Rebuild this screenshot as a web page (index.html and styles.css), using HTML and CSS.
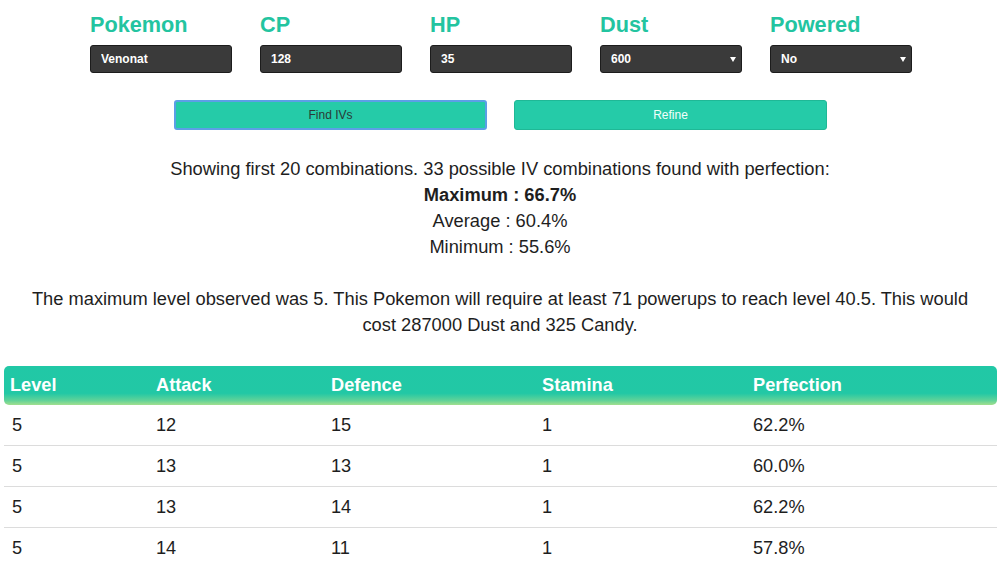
FILE: index.html
```html
<!DOCTYPE html>
<html>
<head>
<meta charset="utf-8">
<link rel="stylesheet" href="styles.css">
</head>
<body>
<div class="form">
  <div class="field">
    <label class="label">Pokemon</label>
    <input class="input" type="text" value="Venonat">
  </div>
  <div class="field">
    <label class="label">CP</label>
    <input class="input" type="text" value="128">
  </div>
  <div class="field">
    <label class="label">HP</label>
    <input class="input" type="text" value="35">
  </div>
  <div class="field">
    <label class="label">Dust</label>
    <div class="select-wrap"><select class="input select"><option>600</option></select></div>
  </div>
  <div class="field">
    <label class="label">Powered</label>
    <div class="select-wrap"><select class="input select"><option>No</option></select></div>
  </div>
</div>
<div class="actions">
  <button class="btn btn-focus">Find IVs</button>
  <button class="btn btn-light">Refine</button>
</div>
<div class="summary">
  <p>Showing first 20 combinations. 33 possible IV combinations found with perfection:</p>
  <p class="bold">Maximum : 66.7%</p>
  <p>Average : 60.4%</p>
  <p>Minimum : 55.6%</p>
</div>
<div class="summary level">
  <p>The maximum level observed was 5. This Pokemon will require at least 71 powerups to reach level 40.5. This would cost 287000 Dust and 325 Candy.</p>
</div>
<table class="results">
  <thead>
    <tr><th class="c1">Level</th><th class="c2">Attack</th><th class="c3">Defence</th><th class="c4">Stamina</th><th class="c5">Perfection</th></tr>
  </thead>
  <tbody>
    <tr><td>5</td><td>12</td><td>15</td><td>1</td><td>62.2%</td></tr>
    <tr><td>5</td><td>13</td><td>13</td><td>1</td><td>60.0%</td></tr>
    <tr><td>5</td><td>13</td><td>14</td><td>1</td><td>62.2%</td></tr>
    <tr><td>5</td><td>14</td><td>11</td><td>1</td><td>57.8%</td></tr>
  </tbody>
</table>
</body>
</html>
```
FILE: styles.css
```css
* { box-sizing: border-box; }
html, body { margin: 0; padding: 0; background: #fff; }
body {
  font-family: "Liberation Sans", Arial, sans-serif;
  color: #1e1e1e;
  overflow: hidden;
}
.form {
  display: flex;
  padding: 12px 0 0 90px;
}
.field {
  width: 170px;
  display: flex;
  flex-direction: column;
}
.label {
  font-size: 21.7px;
  line-height: 26px;
  font-weight: bold;
  color: #23c4a0;
  height: 33px;
}
.input {
  width: 142px;
  height: 28px;
  background: #3a3a3a;
  border: 1px solid #1c1c1c;
  border-radius: 3px;
  color: #fff;
  font-family: "Liberation Sans", Arial, sans-serif;
  font-size: 12px;
  font-weight: bold;
  padding: 0 0 0 10px;
  margin: 0;
  outline: none;
}
.select-wrap {
  position: relative;
  width: 142px;
}
.select {
  appearance: none;
  -webkit-appearance: none;
  display: block;
}
.select-wrap::after {
  content: "";
  position: absolute;
  right: 6px;
  top: 12px;
  border-left: 3px solid transparent;
  border-right: 3px solid transparent;
  border-top: 5px solid #fff;
}
.actions {
  display: flex;
  justify-content: center;
  gap: 27px;
  margin-top: 27px;
  padding-left: 1px;
}
.btn {
  width: 313px;
  height: 30px;
  background: #25cba8;
  border: 1px solid #1fb896;
  border-radius: 3px;
  font-family: "Liberation Sans", Arial, sans-serif;
  font-size: 12px;
  padding: 0;
  margin: 0;
}
.btn-focus {
  border: 2px solid #5b9fe6;
  color: #2a3a36;
}
.btn-light {
  color: #f2fffb;
}
.summary {
  text-align: center;
  font-size: 18.3px;
  line-height: 26px;
  margin-top: 26px;
}
.summary p { margin: 0; }
.bold { font-weight: bold; }
.level {
  margin: 26px auto 0;
  width: 960px;
}
.results {
  margin: 28px 0 0 4px;
  width: 993px;
  border-collapse: separate;
  border-spacing: 0;
  font-size: 18.2px;
  table-layout: fixed;
}
.results th {
  text-align: left;
  color: #fff;
  font-weight: bold;
  height: 39px;
  padding: 0 0 0 6px;
  background: linear-gradient(to bottom, #21c8a6 0%, #22c8a5 70%, #5fd299 88%, #a2df8e 100%);
}
.results th.c1 { width: 146px; border-radius: 5px 0 0 5px; }
.results th.c2 { width: 175px; }
.results th.c3 { width: 211px; }
.results th.c4 { width: 211px; }
.results th.c5 { border-radius: 0 5px 5px 0; }
.results td {
  height: 41px;
  padding: 1px 0 0 6px;
  color: #1e1e1e;
  border-bottom: 1px solid #dcdcdc;
}
.results td:first-child { padding-left: 8px; }
```
